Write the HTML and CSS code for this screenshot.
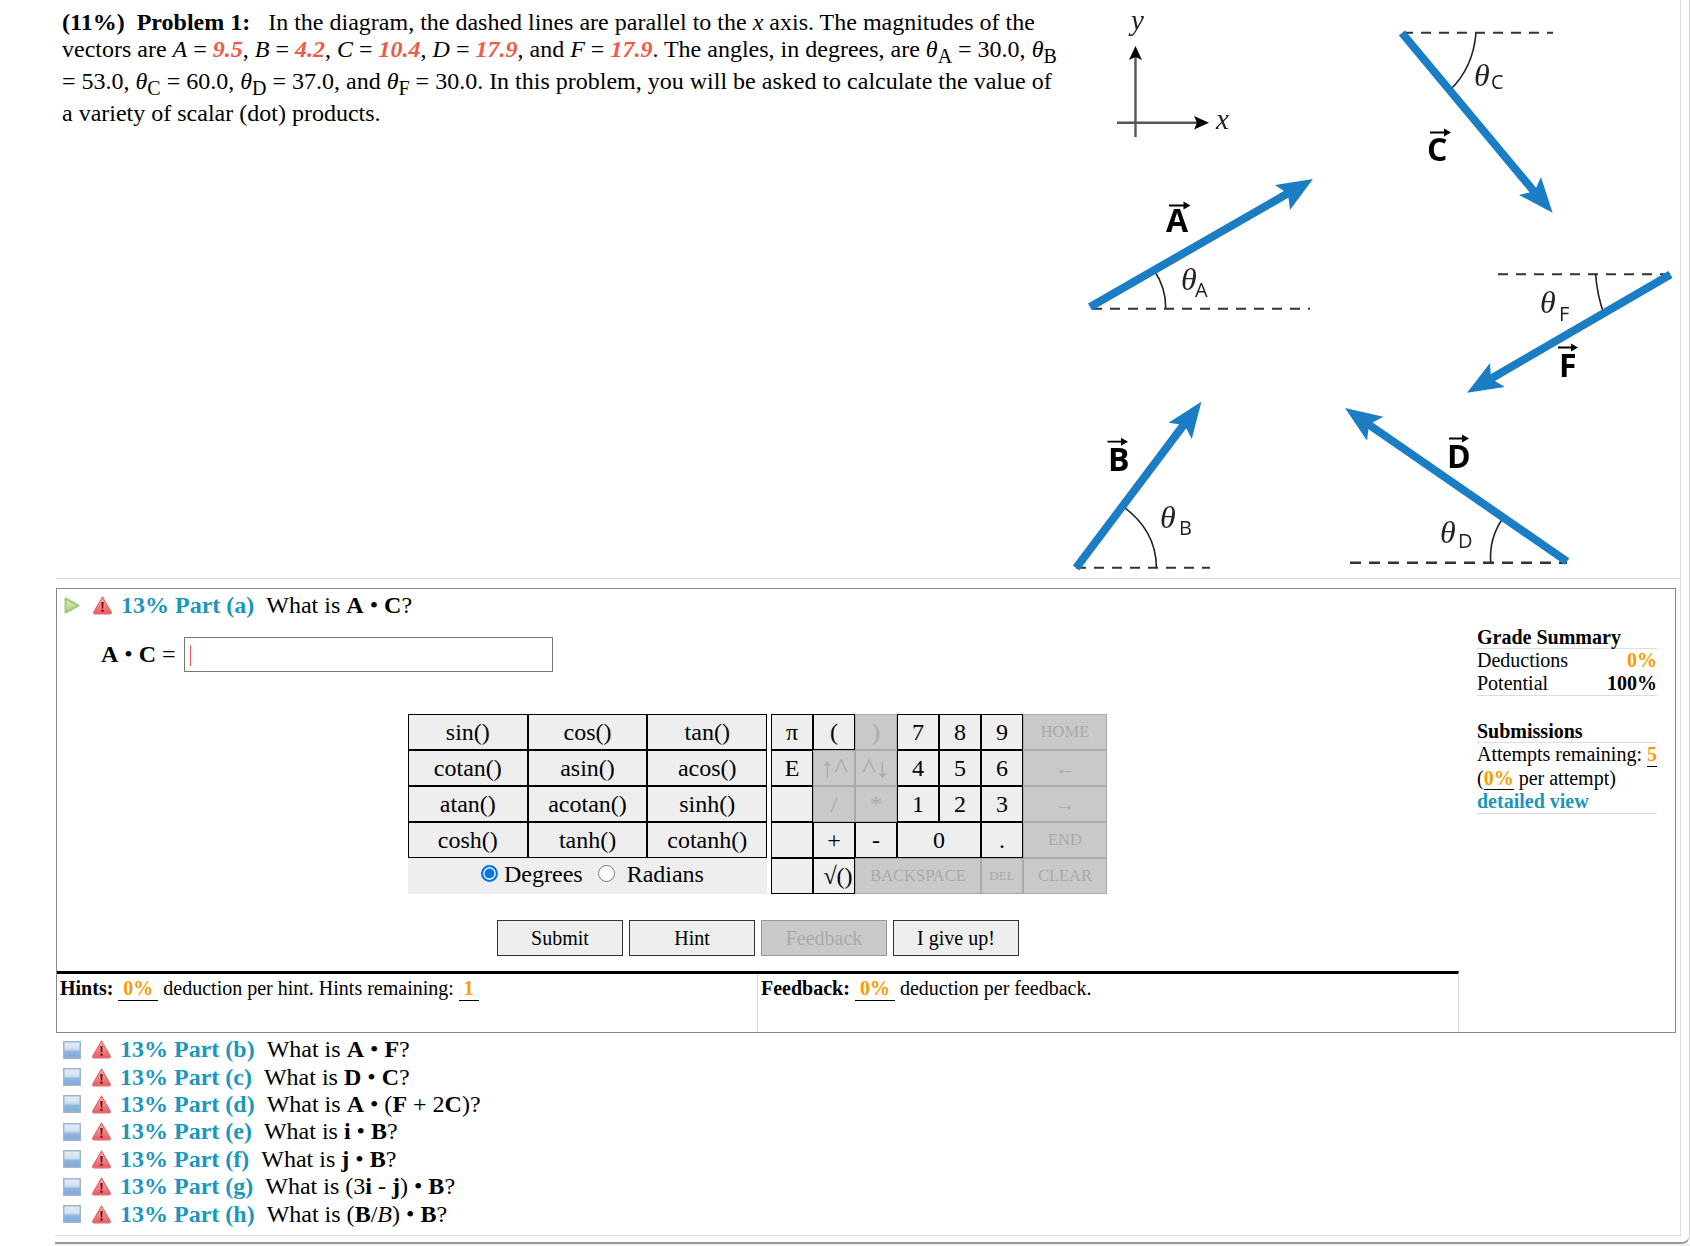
FILE: index.html
```html
<!DOCTYPE html>
<html lang="en">
<head>
<meta charset="utf-8">
<title>Problem 1</title>
<link rel="stylesheet" href="styles.css">
</head>
<body>
<svg width="0" height="0" class="defs">
  <defs>
    <linearGradient id="gPlay" x1="0" y1="0" x2="0" y2="1"><stop offset="0" stop-color="#dcedc0"/><stop offset="1" stop-color="#a9d07a"/></linearGradient>
    <linearGradient id="gWarn" x1="0" y1="0" x2="0" y2="1"><stop offset="0" stop-color="#f9b4b4"/><stop offset="1" stop-color="#e65a5f"/></linearGradient>
    <linearGradient id="gBox" x1="0" y1="0" x2="0" y2="1"><stop offset="0" stop-color="#e6eef7"/><stop offset="0.45" stop-color="#cfdff0"/><stop offset="0.6" stop-color="#8db5e0"/><stop offset="1" stop-color="#7fa9d8"/></linearGradient>
    <symbol id="warn" viewBox="0 0 19 19">
      <path d="M9.5 1 L18.2 16 Q18.6 17.8 17 17.8 L2 17.8 Q.4 17.8 .8 16 Z" fill="url(#gWarn)" stroke="#d8696e" stroke-width="1.2" stroke-linejoin="round"/>
      <path d="M8.3 6 h2.4 l-.5 6.5 h-1.4 Z" fill="#7a1216"/>
      <rect x="8.4" y="13.6" width="2.2" height="2.2" fill="#7a1216"/>
    </symbol>
    <symbol id="box" viewBox="0 0 18 18">
      <rect x="0.75" y="0.75" width="16.5" height="16.5" fill="url(#gBox)" stroke="#9fb6cf" stroke-width="1.5"/>
    </symbol>
    <symbol id="play" viewBox="0 0 16 17">
      <path d="M1.5 1.5 L14.5 8.5 L1.5 15.5 Z" fill="url(#gPlay)" stroke="#a3c97a" stroke-width="2" stroke-linejoin="round"/>
    </symbol>
  </defs>
</svg>
<div class="shell">
<div class="frame">
<main class="page">
  <section class="problem">
    <p class="statement"><b>(11%)&nbsp; Problem 1:</b>&nbsp;&nbsp; In the diagram, the dashed lines are parallel to the <i>x</i> axis. The magnitudes of the vectors are <i>A</i> = <b class="v">9.5</b>, <i>B</i> = <b class="v">4.2</b>, <i>C</i> = <b class="v">10.4</b>, <i>D</i> = <b class="v">17.9</b>, and <i>F</i> = <b class="v">17.9</b>. The angles, in degrees, are <i>θ</i><sub>A</sub> = 30.0, <i>θ</i><sub>B</sub> = 53.0, <i>θ</i><sub>C</sub> = 60.0, <i>θ</i><sub>D</sub> = 37.0, and <i>θ</i><sub>F</sub> = 30.0. In this problem, you will be asked to calculate the value of a variety of scalar (dot) products.</p>
    <svg class="diagram" viewBox="1060 0 620 578" width="620" height="578" xmlns="http://www.w3.org/2000/svg">
      <g class="ax">
        <line x1="1135.5" y1="56" x2="1135.5" y2="137"/>
        <line x1="1117" y1="122.7" x2="1197" y2="122.7"/>
      </g>
      <path d="M1135.5 46 L1142 60 L1135.5 57 L1129 60 Z M1209 122.7 L1194 116 L1197 122.7 L1194 129.5 Z" fill="#000"/>
      <text class="axl" x="1131" y="30">y</text>
      <text class="axl" x="1216" y="129">x</text>

      <g class="dash">
        <line x1="1403" y1="32.7" x2="1553" y2="32.7"/>
        <line x1="1092" y1="308.7" x2="1310" y2="308.7"/>
        <line x1="1498" y1="274.3" x2="1670" y2="274.3"/>
        <line x1="1076" y1="567.7" x2="1210" y2="567.7"/>
        <line class="thick" x1="1350" y1="562.7" x2="1567" y2="562.7"/>
      </g>
      <g class="arc">
        <path d="M1476 33 Q1473 68 1450 90"/>
        <path d="M1154.4 270.7 Q1166 288 1165.7 308"/>
        <path d="M1595.6 274 Q1597 295 1604 314"/>
        <path d="M1122 505.7 Q1156 530 1156.4 567"/>
        <path d="M1503 518 Q1489 538 1490.7 562"/>
      </g>
      <g class="vec">
        <line x1="1402" y1="33" x2="1537" y2="195"/>
        <line x1="1090" y1="307" x2="1292" y2="191"/>
        <line x1="1670.5" y1="274.5" x2="1487" y2="381"/>
        <line x1="1076" y1="568" x2="1187" y2="420.5"/>
        <line x1="1567" y1="561.5" x2="1365" y2="422"/>
      </g>
      <g class="vech">
        <path d="M1552.6 212.7 L1541 177 L1534.5 191.3 L1519 195 Z"/>
        <path d="M1313 179 L1275 185 L1288 194 L1290 210 Z"/>
        <path d="M1467 392.7 L1490 363 L1491 378.5 L1504.8 387 Z"/>
        <path d="M1201.4 401.7 L1168.5 422.7 L1184.4 425 L1191.8 439 Z"/>
        <path d="M1345 408 L1383.4 416.7 L1369 424.6 L1367 440.7 Z"/>
      </g>

      <g class="name">
        <text x="1427" y="161">C</text>
        <text x="1166" y="232">A</text>
        <text x="1559" y="377">F</text>
        <text x="1108" y="471">B</text>
        <text x="1447" y="468">D</text>
      </g>
      <g class="narrow">
        <path d="M1430 132.5 H1447 M1169 205.5 H1187 M1558 347.5 H1575 M1107.5 441.7 H1125 M1449 438.5 H1466"/>
      </g>
      <path d="M1451 132.5 l-7 -4 v8 Z M1190.5 205.5 l-7 -4 v8 Z M1578 347.5 l-7 -4 v8 Z M1128 441.7 l-7 -4 v8 Z M1469 438.5 l-7 -4 v8 Z" fill="#000"/>

      <g class="theta">
        <text x="1474" y="86">θ</text>
        <text x="1181" y="290">θ</text>
        <text x="1540" y="313">θ</text>
        <text x="1160" y="528">θ</text>
        <text x="1440" y="542.7">θ</text>
      </g>
      <g class="thsub">
        <text x="1491" y="89">C</text>
        <text x="1195" y="296.7">A</text>
        <text x="1559" y="320.7">F</text>
        <text x="1179" y="535">B</text>
        <text x="1458" y="548">D</text>
      </g>
    </svg>
  </section>

  <section class="active-part">
    <div class="part-main">
      <h2 class="part-head">
        <svg class="ico-play"><use href="#play"/></svg>
        <svg class="ico-warn"><use href="#warn"/></svg>
        <a class="part-link">13% Part (a)</a>
        <span class="q">What is <b>A</b> • <b>C</b>?</span>
      </h2>
      <div class="answer">
        <label class="answer-label"><b>A</b> • <b>C</b> =</label>
        <div class="answer-box"><span class="caret"></span></div>
      </div>
      <div class="calc">
        <div class="funcs">
          <button class="k">sin()</button><button class="k">cos()</button><button class="k">tan()</button>
          <button class="k">cotan()</button><button class="k">asin()</button><button class="k">acos()</button>
          <button class="k">atan()</button><button class="k">acotan()</button><button class="k">sinh()</button>
          <button class="k">cosh()</button><button class="k">tanh()</button><button class="k">cotanh()</button>
          <div class="mode">
            <span class="radio on"></span><span class="mode-a">Degrees</span>
            <span class="radio"></span><span class="mode-b">Radians</span>
          </div>
        </div>
        <div class="pad">
          <button class="k">π</button><button class="k">(</button><button class="k off">)</button><button class="k">7</button><button class="k">8</button><button class="k">9</button><button class="k off small">HOME</button>
          <button class="k">E</button><button class="k off big">↑^</button><button class="k off big">^↓</button><button class="k">4</button><button class="k">5</button><button class="k">6</button><button class="k off arrow">←</button>
          <button class="k"></button><button class="k off">/</button><button class="k off">*</button><button class="k">1</button><button class="k">2</button><button class="k">3</button><button class="k off arrow">→</button>
          <button class="k"></button><button class="k">+</button><button class="k">-</button><button class="k span2">0</button><button class="k">.</button><button class="k off small">END</button>
          <button class="k"></button><button class="k root">√()</button><button class="k off small span3">BACKSPACE</button><button class="k off tiny">DEL</button><button class="k off small">CLEAR</button>
        </div>
      </div>
      <div class="actions">
        <button class="act">Submit</button>
        <button class="act">Hint</button>
        <button class="act off">Feedback</button>
        <button class="act">I give up!</button>
      </div>
      <div class="notes">
        <div class="note"><b>Hints:</b> <b class="pct">0%</b> deduction per hint. Hints remaining: <b class="pct">1</b></div>
        <div class="note"><b>Feedback:</b> <b class="pct">0%</b> deduction per feedback.</div>
      </div>
    </div>
    <aside class="side">
      <h3 class="side-title">Grade Summary</h3>
      <div class="ruled">
        <div class="side-row"><span>Deductions</span><b class="org">0%</b></div>
        <div class="side-row"><span>Potential</span><b>100%</b></div>
      </div>
      <h3 class="side-title second">Submissions</h3>
      <div class="ruled">
        <div class="side-row"><span>Attempts remaining:</span><b class="org-u">5</b></div>
        <div>(<b class="org-u">0%</b> per attempt)</div>
        <div><a class="detail">detailed view</a></div>
      </div>
    </aside>
  </section>

  <ul class="parts">
    <li class="part-line"><svg class="ico-box"><use href="#box"/></svg><svg class="ico-warn"><use href="#warn"/></svg><a class="part-link">13% Part (b)</a><span class="q">What is <b>A</b> • <b>F</b>?</span></li>
    <li class="part-line"><svg class="ico-box"><use href="#box"/></svg><svg class="ico-warn"><use href="#warn"/></svg><a class="part-link">13% Part (c)</a><span class="q">What is <b>D</b> • <b>C</b>?</span></li>
    <li class="part-line"><svg class="ico-box"><use href="#box"/></svg><svg class="ico-warn"><use href="#warn"/></svg><a class="part-link">13% Part (d)</a><span class="q">What is <b>A</b> • (<b>F</b> + 2<b>C</b>)?</span></li>
    <li class="part-line"><svg class="ico-box"><use href="#box"/></svg><svg class="ico-warn"><use href="#warn"/></svg><a class="part-link">13% Part (e)</a><span class="q">What is <b>i</b> • <b>B</b>?</span></li>
    <li class="part-line"><svg class="ico-box"><use href="#box"/></svg><svg class="ico-warn"><use href="#warn"/></svg><a class="part-link">13% Part (f)</a><span class="q">What is <b>j</b> • <b>B</b>?</span></li>
    <li class="part-line"><svg class="ico-box"><use href="#box"/></svg><svg class="ico-warn"><use href="#warn"/></svg><a class="part-link">13% Part (g)</a><span class="q">What is (3<b>i</b> - <b>j</b>) • <b>B</b>?</span></li>
    <li class="part-line"><svg class="ico-box"><use href="#box"/></svg><svg class="ico-warn"><use href="#warn"/></svg><a class="part-link">13% Part (h)</a><span class="q">What is (<b>B</b>/<i>B</i>) • <b>B</b>?</span></li>
  </ul>
</main>
</div>
<div class="strip"></div>
</div>
</body>
</html>
```
FILE: styles.css
```css
* { box-sizing: border-box; }
html, body { margin: 0; padding: 0; background: #fff; }
body { font-family: "Liberation Serif", "Times New Roman", serif; color: #000; width: 1690px; height: 1246px; overflow: hidden; }
.defs { position: absolute; }
.shell { margin-left: 55px; width: 1635px; }
.frame { height: 1244px; border-bottom: 2px solid #999; border-right: 1px solid #ccc; border-bottom-right-radius: 8px; }
.strip { height: 2px; background: #f0f0f0; }
.page { width: 1626px; height: 1236px; background: #fff; border-right: 1px solid #ddd; border-bottom: 1px solid #ddd; padding-left: 1px; display: flex; flex-direction: column; }

.problem { display: flex; justify-content: space-between; height: 579px; flex: none; border-bottom: 1px solid #ddd; }
.statement { margin: 0; padding: 9px 0 0 6px; width: 1007px; font-size: 24px; line-height: 27px; }
.statement sub { font-size: 20px; line-height: 24px; vertical-align: -6px; }
.v { color: #f15a4a; font-style: italic; font-weight: 700; }

.diagram { flex: none; filter: blur(.4px); }
.ax line { stroke: #555; stroke-width: 2.4; }
.axl { font: italic 29px "Liberation Serif", serif; fill: #222; }
.dash line { stroke: #333; stroke-width: 2; stroke-dasharray: 10 8; }
.dash .thick { stroke-width: 2.6; stroke-dasharray: 11 8; }
.arc path { fill: none; stroke: #222; stroke-width: 1.6; }
.vec line { stroke: #1b7dc4; stroke-width: 8; }
.vech path { fill: #1b7dc4; }
.name text { font: 700 32px "Open Sans", sans-serif; fill: #000; }
.narrow path { stroke: #000; stroke-width: 1.8; fill: none; }
.theta text { font: italic 32px "Liberation Serif", serif; fill: #222; }
.thsub text { font: 400 20px "Open Sans", sans-serif; fill: #222; }

.active-part { margin-top: 9px; height: 445px; flex: none; width: 1620px; border: 1.5px solid #888; display: flex; }
.part-main { width: 1402px; flex: none; display: flex; flex-direction: column; }
.part-head { margin: 0; display: flex; align-items: center; height: 33px; padding-left: 7px; font-size: 24px; font-weight: 400; }
.ico-play { width: 16px; height: 17px; margin: 0 13px 0 0; }
.ico-warn { width: 19px; height: 19px; flex: none; }
.ico-box { width: 18px; height: 18px; flex: none; margin-right: 11px; }
.part-link { color: #1b97bd; font-weight: 700; margin-left: 9px; }
.q { margin-left: 12px; }

.answer { display: flex; align-items: center; margin-top: 15px; padding-left: 44px; font-size: 24px; height: 35px; }
.answer-label { margin-right: 8px; }
.answer-box { width: 369px; height: 35px; border: 1px solid #777; background: #fff; padding: 7px 5px; }
.caret { display: block; width: 1.5px; height: 21px; background: #f25a5a; }

.calc { display: flex; gap: 4px; margin: 42px 0 0 351px; }
.funcs { display: grid; grid-template-columns: repeat(3, 119.7px); grid-auto-rows: 36px; width: 359px; }
.pad { display: grid; grid-template-columns: repeat(6, 42px) 84px; grid-auto-rows: 36px; width: 336px; }
.k { font: 24px "Liberation Serif", serif; background: #eee; color: #000; border: 1.5px solid #000; padding: 0; margin: 0; border-radius: 0; }
.k.off { background: #c9c9c9; color: #aaa; border-color: #aaa; }
.k.small { font-size: 16.5px; }
.k.tiny { font-size: 13px; }
.k.big { font-size: 28px; }
.k.arrow { font-size: 20px; }
.k.root { padding-left: 8px; white-space: nowrap; }
.span2 { grid-column: span 2; }
.span3 { grid-column: span 3; }
.mode { grid-column: span 3; background: #eee; display: flex; align-items: center; font-size: 24px; padding: 0 0 4px 73px; }
.radio { width: 17px; height: 17px; flex: none; border-radius: 50%; border: 1.5px solid #777; background: #fff; margin-top: -2px; }
.radio.on { border: 2px solid #0a75e8; box-shadow: inset 0 0 0 1.5px #fff; background: #0a75e8; }
.mode-a { margin: 0 15px 0 6px; }
.mode-b { margin-left: 12px; }

.actions { display: flex; gap: 6px; margin: 26px 0 0 440px; }
.act { width: 126px; height: 36px; font: 20px "Liberation Serif", serif; background: #eee; color: #000; border: 1.5px solid #333; padding: 0; }
.act.off { background: #c9c9c9; color: #aaa; border-color: #999; }

.notes { display: flex; margin-top: 15px; border-top: 3.5px solid #000; flex: 1; border-right: 1px solid #ddd; }
.note { flex: 1; padding: 3px 3px; font-size: 20px; }
.note + .note { border-left: 1px solid #ddd; }
.pct { color: #f90; padding: 0 5px 1px; border-bottom: 1.5px solid #000; }

.side { flex: none; width: 180px; margin-left: 18px; font-size: 20px; line-height: 23px; padding-top: 37px; }
.side-title { margin: 0; font-size: 20px; font-weight: 700; border-bottom: 1px solid #ddd; line-height: 22px; height: 23px; }
.side-title.second { margin-top: 24px; }
.ruled { border-bottom: 1px solid #ddd; }
.side-row { display: flex; justify-content: space-between; }
.org { color: #f90; }
.org-u { color: #f90; border-bottom: 1.5px solid #000; }
.detail { color: #1b97bd; font-weight: 700; }

.parts { list-style: none; margin: 0; padding: 3px 0 0 7px; }
.part-line { display: flex; align-items: center; height: 27.4px; font-size: 24px; }
```
